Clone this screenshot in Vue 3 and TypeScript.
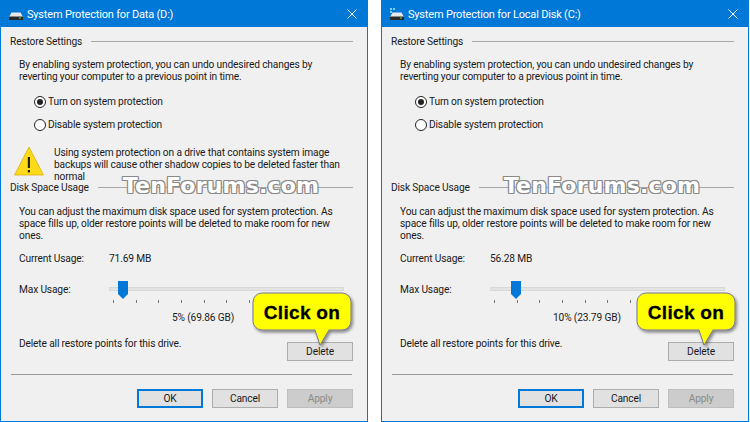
<script setup lang="ts">
interface Dialog {
  title: string
  usage: string
  percent: string
  thumb: number
  warning: boolean
  badge: boolean
  calloutShift: number
}
const dialogs: Dialog[] = [
  { title: 'System Protection for Data (D:)', usage: '71.69 MB', percent: '5% (69.86 GB)', thumb: 9, warning: true, badge: false, calloutShift: 0 },
  { title: 'System Protection for Local Disk (C:)', usage: '56.28 MB', percent: '10% (23.79 GB)', thumb: 21, warning: false, badge: true, calloutShift: 3 }
]
const ticks = [0, 1, 2, 3, 4, 5, 6, 7, 8, 9, 10]
</script>

<template>
  <div class="page">
    <section v-for="d in dialogs" :key="d.title" class="dialog">
      <header class="titlebar">
        <svg class="drive" width="14" height="14" viewBox="0 0 14 14">
          <g v-if="d.badge" fill="#7fd0f5">
            <rect x="0" y="1" width="2" height="2" />
            <rect x="3" y="1" width="2" height="2" />
            <rect x="0" y="4" width="2" height="2" />
          </g>
          <path d="M2.5 5.5h9L14 10H0z" fill="#e8e8e8" />
          <rect x="0" y="9.5" width="14" height="3.5" rx="0.5" fill="#2a2a2a" />
          <rect x="10" y="10.5" width="2" height="1" fill="#5fe05f" />
        </svg>
        <span class="title">{{ d.title }}</span>
        <svg class="close" width="10" height="10" viewBox="0 0 10 10">
          <path d="M0.5 0.5l9 9M9.5 0.5l-9 9" stroke="#fff" stroke-width="1" fill="none" />
        </svg>
      </header>

      <div class="body">
        <div class="group first"><span>Restore Settings</span><i></i></div>
        <p class="para intro">By enabling system protection, you can undo undesired changes by<br />reverting your computer to a previous point in time.</p>
        <label class="radio r1"><b class="dot on"></b>Turn on system protection</label>
        <label class="radio r2"><b class="dot"></b>Disable system protection</label>

        <div class="warn">
          <svg v-if="d.warning" class="warn-icon" width="30" height="30" viewBox="0 0 30 30">
            <path d="M15 1L29.5 29H0.5z" fill="#fedb1a" stroke="#d8a800" stroke-width="0.7" />
            <rect x="13.8" y="11" width="2.2" height="11" fill="#222" />
            <rect x="13.8" y="24" width="2.2" height="2.4" fill="#222" />
          </svg>
          <p v-if="d.warning" class="warn-text">Using system protection on a drive that contains system image<br />backups will cause other shadow copies to be deleted faster than<br />normal</p>
        </div>

        <div class="group second"><span>Disk Space Usage</span><i></i></div>
        <p class="para adjust">You can adjust the maximum disk space used for system protection. As<br />space fills up, older restore points will be deleted to make room for new<br />ones.</p>
        <div class="usage"><span class="label">Current Usage:</span><span>{{ d.usage }}</span></div>

        <div class="max">
          <span class="label">Max Usage:</span>
          <div class="slider">
            <div class="track"></div>
            <svg class="thumb" :style="{ left: d.thumb + 'px' }" width="10" height="18" viewBox="0 0 10 18">
              <path d="M0 0h10v13l-5 5-5-5z" fill="#0078d7" />
            </svg>
            <div class="ticks"><s v-for="t in ticks" :key="t"></s></div>
          </div>
        </div>
        <div class="percent">{{ d.percent }}</div>

        <div class="delete-row">
          <span>Delete all restore points for this drive.</span>
          <button class="btn delete">Delete</button>
        </div>
        <hr class="sep" />
        <div class="actions">
          <button class="btn ok">OK</button>
          <button class="btn">Cancel</button>
          <button class="btn apply">Apply</button>
        </div>
      </div>

      <div class="watermark">TenForums.com</div>
      <div class="callout" :style="{ marginLeft: d.calloutShift + 'px' }">
        <svg width="104" height="56" viewBox="0 0 104 56">
          <defs>
            <filter id="sh" x="-10%" y="-10%" width="125%" height="130%">
              <feDropShadow dx="1.5" dy="2" stdDeviation="1.5" flood-color="#000" flood-opacity="0.45" />
            </filter>
          </defs>
          <path d="M10 1h80a9 9 0 0 1 9 9v19a9 9 0 0 1-9 9H77L68 53 63 38H10a9 9 0 0 1-9-9V10a9 9 0 0 1 9-9z" fill="#ffff00" stroke="#77779a" stroke-width="1" filter="url(#sh)" />
        </svg>
        <span>Click on</span>
      </div>
    </section>
  </div>
</template>

<style>
html, body { margin: 0; background: #fff; }
</style>

<style scoped>
.page {
  width: 750px;
  height: 422px;
  display: flex;
  justify-content: space-between;
  padding-right: 1px;
  box-sizing: border-box;
  overflow: hidden;
  font-family: Roboto, "Open Sans", sans-serif;
  font-size: 10.2px;
  letter-spacing: -0.15px;
  line-height: 12px;
  color: #1a1a1a;
  white-space: nowrap;
}
.dialog {
  position: relative;
  width: 368px;
  height: 422px;
  box-sizing: border-box;
  border: 1px solid #0078d7;
  border-top: 0;
  background: #f0f0f0;
}
.titlebar {
  height: 27px;
  margin: 0 -1px;
  background: #0078d7;
  color: #fff;
  display: flex;
  align-items: center;
  padding: 0 11px 0 9px;
}
.drive { margin-right: 4px; }
.title { font-size: 11px; letter-spacing: -0.19px; flex: 1; padding-top: 2px; }
.body { padding: 0 14px 0 9px; }
.group { display: flex; align-items: center; height: 14px; }
.group span { padding-top: 2px; }
.group i { flex: 1; height: 1px; background: #a8a8a8; margin-left: 9px; }
.group.first { margin-top: 7px; }
.group.second { margin-top: -3px; }
.para { margin: 0 0 0 9px; }
.intro { margin-top: 11px; }
.adjust { margin-top: 12px; }
.radio { display: flex; align-items: center; height: 14px; margin-left: 23px; }
.r1 { margin-top: 12px; }
.r2 { margin-top: 9px; }
.dot {
  width: 12px;
  height: 12px;
  box-sizing: border-box;
  border: 1px solid #222;
  border-radius: 50%;
  background: #fff;
  margin: 0 2px 0 1px;
  display: flex;
  align-items: center;
  justify-content: center;
}
.dot.on::after {
  content: "";
  width: 6px;
  height: 6px;
  border-radius: 50%;
  background: #222;
}
.warn { display: flex; height: 36px; margin: 15px 0 0 4px; }
.warn-icon { flex: none; margin-right: 10px; margin-top: -1px; }
.warn-text { margin: 0; }
.usage { display: flex; height: 14px; margin: 10px 0 0 9px; align-items: center; }
.label { width: 90px; flex: none; }
.max { display: flex; margin: 15px 0 0 9px; height: 29px; }
.max .label { padding-top: 3px; }
.slider { position: relative; width: 235px; height: 29px; }
.track {
  position: absolute;
  left: 0;
  right: 0;
  top: 6px;
  height: 4px;
  background: #e4e4e4;
  border: 1px solid #d8d8d8;
  box-sizing: border-box;
}
.thumb { position: absolute; top: 0; }
.ticks {
  position: absolute;
  left: 4px;
  top: 19px;
  width: 228px;
  display: flex;
  justify-content: space-between;
}
.ticks s { width: 1px; height: 3px; background: #777; }
.percent { margin: 2px 0 0 162px; height: 14px; }
.delete-row { display: flex; justify-content: space-between; align-items: flex-start; margin: 12px 0 0 9px; height: 23px; }
.btn {
  width: 66px;
  height: 19px;
  box-sizing: border-box;
  border: 1px solid #adadad;
  background: #e1e1e1;
  font: inherit;
  letter-spacing: inherit;
  color: #1a1a1a;
  padding: 1px 0 0;
}
.delete { margin-top: 4px; }
.sep { margin: 13px 1px 0 1px; border: 0; height: 1px; background: #9a9a9a; }
.actions { display: flex; justify-content: flex-end; gap: 9px; margin-top: 14px; }
.ok { border: 2px solid #0078d7; }
.apply { background: #cccccc; border-color: #bfbfbf; color: #8a8a8a; }
.watermark {
  position: absolute;
  left: 121px;
  top: 172px;
  width: 198px;
  text-align: center;
  font-family: "DejaVu Sans", sans-serif;
  font-weight: 700;
  font-size: 22px;
  line-height: 28px;
  letter-spacing: 0.2px;
  color: #fff;
  text-shadow: 1px 0 #8a8a8a, -1px 0 #8a8a8a, 0 1px #8a8a8a, 0 -1px #8a8a8a, 1px 1px #8a8a8a, -1px -1px #8a8a8a, 1px -1px #8a8a8a, -1px 1px #8a8a8a;
}
.callout { position: absolute; left: 251px; top: 292px; width: 104px; height: 56px; }
.callout svg { display: block; }
.callout span {
  position: absolute;
  left: 0;
  top: 10px;
  width: 100px;
  text-align: center;
  font-family: "Liberation Sans", sans-serif;
  font-weight: 700;
  font-size: 19px;
  line-height: 22px;
  letter-spacing: 0.3px;
  -webkit-text-stroke: 0.3px #000;
  color: #000;
}
</style>
